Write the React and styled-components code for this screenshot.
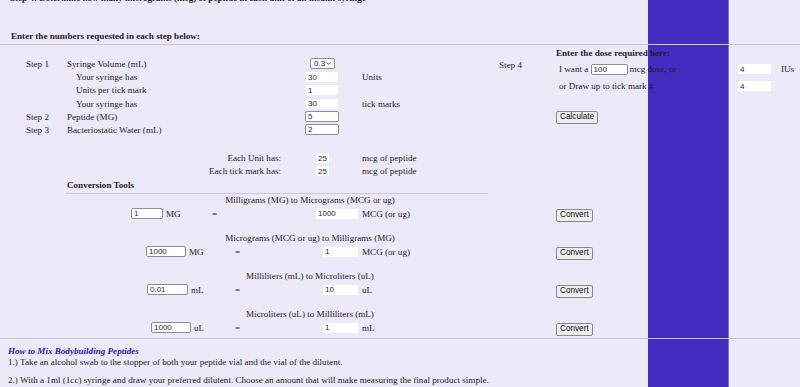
import React from 'react'
import styled, { createGlobalStyle } from 'styled-components'
import { ChevronDown } from 'lucide-react'

const Global = createGlobalStyle`
    html, body {
        margin : 0;
        padding : 0;
        background : #ece9f8;
    }
    body {
        font-family : "Liberation Serif", "Times New Roman", serif;
        font-size : 9.1px;
        color : #1e1e28;
    }
`

const Page = styled.div`
    position : relative;
    width : 800px;
    height : 387px;
    overflow : hidden;
    background : #ece9f8;
`

// purple column behind the calculator
const SideBand = styled.div`
    position : absolute;
    top : 0;
    bottom : 0;
    left : 648px;
    width : 80px;
    background : #442bc0;
    border-right : 1px solid #7a6be0;
    z-index : 0;
`

const Content = styled.div`
    position : relative;
    z-index : 1;
`

const CutHeader = styled.div`
    height : 12px;
    line-height : 12px;
    margin-top : -8px;
    padding-left : 10px;
    font-weight : bold;
    white-space : nowrap;
`

const Intro = styled.div`
    margin-top : 26px;
    height : 13px;
    line-height : 13px;
    padding-left : 11px;
    font-weight : bold;
`

const Rule = styled.div`
    height : 1px;
    background : #cbc7e2;
    margin-top : ${p => p.$top || 0}px;
    margin-left : ${p => p.$left || 0}px;
    width : ${p => p.$width ? p.$width + 'px' : 'auto'};
`

const TopBlock = styled.div`
    display : flex;
`

const StepGrid = styled.div`
    width : 499px;
    padding-top : 12.4px;
    display : grid;
    grid-template-columns : 26px 41px 239px 56px 1fr;
    grid-auto-rows : 13.2px;
    align-items : center;
`

const Cell = styled.div`
    grid-column : ${p => p.$col};
    padding-left : ${p => p.$indent || 0}px;
    white-space : nowrap;
    display : flex;
    align-items : center;
`

const Step4Col = styled.div`
    width : 57px;
    padding-top : 13.5px;
    line-height : 13px;
`

const DosePanel = styled.div`
    padding-top : 0.5px;
    display : grid;
    grid-template-columns : 182px 40px auto;
    grid-template-rows : 15px 17px 17px;
    align-items : center;
`

const DoseTitle = styled.div`
    grid-column : 1 / 4;
    font-weight : bold;
`

const DoseText = styled.div`
    padding-left : 3px;
    display : flex;
    align-items : center;
    white-space : nowrap;
`

const BoxInput = styled.input`
    box-sizing : border-box;
    width : ${p => p.$w || 32}px;
    height : ${p => p.$bordered ? 11 : 10}px;
    margin : 0 ${p => p.$gap || 0}px 0 ${p => p.$shift || 0}px;
    padding : 0 2px;
    font-family : "Liberation Sans", Arial, sans-serif;
    font-size : 8px;
    color : #2a2a2a;
    background : #fff;
    border : ${p => p.$bordered ? '1px solid #8d8d95' : 'none'};
    border-radius : ${p => p.$bordered ? 2 : 0}px;
    outline : none;
`

const SelectWrap = styled.span`
    position : relative;
    display : inline-block;
    margin-left : 4px;
`

const Select = styled.select`
    appearance : none;
    box-sizing : border-box;
    width : 25px;
    height : 11px;
    padding : 0 0 0 3px;
    font-family : "Liberation Sans", Arial, sans-serif;
    font-size : 8px;
    color : #222;
    background : #fff;
    border : 1px solid #8d8d95;
    border-radius : 2px;
`

const SelectArrow = styled.span`
    position : absolute;
    right : 3px;
    top : 2px;
    display : flex;
    pointer-events : none;
`

const Button = styled.button`
    box-sizing : border-box;
    height : 12.5px;
    padding : 0 3px;
    margin-top : ${p => p.$top || 0}px;
    font-family : "Liberation Sans", Arial, sans-serif;
    font-size : 8.2px;
    line-height : 10px;
    color : #111;
    background : #efefef;
    border : 1px solid #8a8a8a;
    border-radius : 2px;
    justify-self : start;
`

const Results = styled.div`
    margin-top : 15px;
    display : grid;
    grid-template-columns : 281px 35px 46px auto;
    grid-auto-rows : 13px;
    align-items : center;
`

const ResultLabel = styled.div`
    text-align : right;
`

const SubTitle = styled.div`
    margin-top : 1px;
    height : 13px;
    line-height : 13px;
    padding-left : 67px;
    font-weight : bold;
`

const Converters = styled.div`
    display : flex;
    flex-direction : column;
    gap : 13px;
`

const ConvTitle = styled.div`
    width : 620px;
    height : 12px;
    line-height : 12px;
    text-align : center;
`

const ConvRow = styled.div`
    display : grid;
    grid-template-columns : ${p => p.$lead}px ${p => p.$eq - p.$lead}px ${p => 316 - p.$eq}px 46px 194px auto;
    height : 13px;
    align-items : center;
`

const Inline = styled.div`
    grid-column : ${p => p.$col};
    display : flex;
    align-items : center;
    white-space : nowrap;
`

const HowTo = styled.div`
    margin-top : 7px;
    padding-left : 8px;
    line-height : 11px;
`

const HowTitle = styled.div`
    color : #2323a6;
    font-weight : bold;
    font-style : italic;
`

const Para = styled.p`
    margin : ${p => p.$gap || 0}px 0 0 0;
`

const steps = [
    { step : 'Step 1', label : 'Syringe Volume (mL)', select : true },
    { label : 'Your syringe has', indent : 9, value : '30', unit : 'Units' },
    { label : 'Units per tick mark', indent : 9, value : '1' },
    { label : 'Your syringe has', indent : 9, value : '30', unit : 'tick marks' },
    { step : 'Step 2', label : 'Peptide (MG)', value : '5', bordered : true },
    { step : 'Step 3', label : 'Bacteriostatic Water (mL)', value : '2', bordered : true },
]

const converters = [
    { title : 'Milligrams (MG) to Micrograms (MCG or ug)', lead : 131, w : 32, input : '1', from : 'MG', eq : 212, out : '1000', outShift : 0, outW : 42, to : 'MCG (or ug)' },
    { title : 'Micrograms (MCG or ug) to Milligrams (MG)', lead : 146, w : 40, input : '1000', from : 'MG', eq : 235, out : '1', outShift : 7, outW : 35, to : 'MCG (or ug)' },
    { title : 'Milliliters (mL) to Microliters (uL)', lead : 147, w : 41, input : '0.01', from : 'mL', eq : 235, out : '10', outShift : 7, outW : 35, to : 'uL' },
    { title : 'Microliters (uL) to Milliliters (mL)', lead : 151, w : 40, input : '1000', from : 'uL', eq : 235, out : '1', outShift : 7, outW : 35, to : 'mL' },
]

function App() {
    return (
        <Page>
            <Global />
            <SideBand />
            <Content>
                <CutHeader>Step 4: Determine how many micrograms (mcg) of peptide in each unit of an insulin syringe</CutHeader>
                <Intro>Enter the numbers requested in each step below:</Intro>
                <Rule $top={1} />

                <TopBlock>
                    <StepGrid>
                        {steps.map((s, i) => (
                            <React.Fragment key={i}>
                                <Cell $col={2}>{s.step || ''}</Cell>
                                <Cell $col={3} $indent={s.indent}>{s.label}</Cell>
                                <Cell $col={4}>
                                    {s.select
                                        ? <SelectWrap>
                                            <Select defaultValue="0.3"><option>0.3</option><option>0.5</option><option>1.0</option></Select>
                                            <SelectArrow><ChevronDown size={7} strokeWidth={3} color="#333" /></SelectArrow>
                                          </SelectWrap>
                                        : <BoxInput readOnly={!s.bordered} $bordered={s.bordered} $shift={s.bordered ? -1 : 0} $w={s.bordered ? 34 : 32} defaultValue={s.value} />}
                                </Cell>
                                <Cell $col={5}>{s.unit || ''}</Cell>
                            </React.Fragment>
                        ))}
                    </StepGrid>

                    <Step4Col>Step 4</Step4Col>

                    <div>
                        <DosePanel>
                            <DoseTitle>Enter the dose required here:</DoseTitle>
                            <DoseText>I want a&nbsp;<BoxInput $bordered $w={37} $gap={2} defaultValue="100" />mcg dose, or</DoseText>
                            <BoxInput readOnly $w={33} defaultValue="4" />
                            <DoseText>IUs</DoseText>
                            <DoseText>or Draw up to tick mark #</DoseText>
                            <BoxInput readOnly $w={33} defaultValue="4" />
                            <div />
                        </DosePanel>
                        <Button $top={16.5}>Calculate</Button>
                    </div>
                </TopBlock>

                <Results>
                    <ResultLabel>Each Unit has:</ResultLabel>
                    <div />
                    <div><BoxInput readOnly $w={13} defaultValue="25" /></div>
                    <div>mcg of peptide</div>
                    <ResultLabel>Each tick mark has:</ResultLabel>
                    <div />
                    <div><BoxInput readOnly $w={13} defaultValue="25" /></div>
                    <div>mcg of peptide</div>
                </Results>

                <SubTitle>Conversion Tools</SubTitle>
                <Rule $top={1.5} $left={66} $width={422} />

                <Converters>
                    {converters.map((c) => (
                        <div key={c.title}>
                            <ConvTitle>{c.title}</ConvTitle>
                            <ConvRow $lead={c.lead} $eq={c.eq}>
                                <Inline $col={2}><BoxInput $bordered $w={c.w} $gap={3} defaultValue={c.input} />{c.from}</Inline>
                                <Inline $col={3}>=</Inline>
                                <Inline $col={4}><BoxInput readOnly $shift={c.outShift} $w={c.outW} defaultValue={c.out} /></Inline>
                                <Inline $col={5}>{c.to}</Inline>
                                <Inline $col={6}><Button $top={3}>Convert</Button></Inline>
                            </ConvRow>
                        </div>
                    ))}
                </Converters>

                <Rule $top={5} />

                <HowTo>
                    <HowTitle>How to Mix Bodybuilding Peptides</HowTitle>
                    <Para>1.) Take an alcohol swab to the stopper of both your peptide vial and the vial of the dilutent.</Para>
                    <Para $gap={7}>2.) With a 1ml (1cc) syringe and draw your preferred dilutent. Choose an amount that will make measuring the final product simple.</Para>
                </HowTo>
            </Content>
        </Page>
    )
}

export default App
